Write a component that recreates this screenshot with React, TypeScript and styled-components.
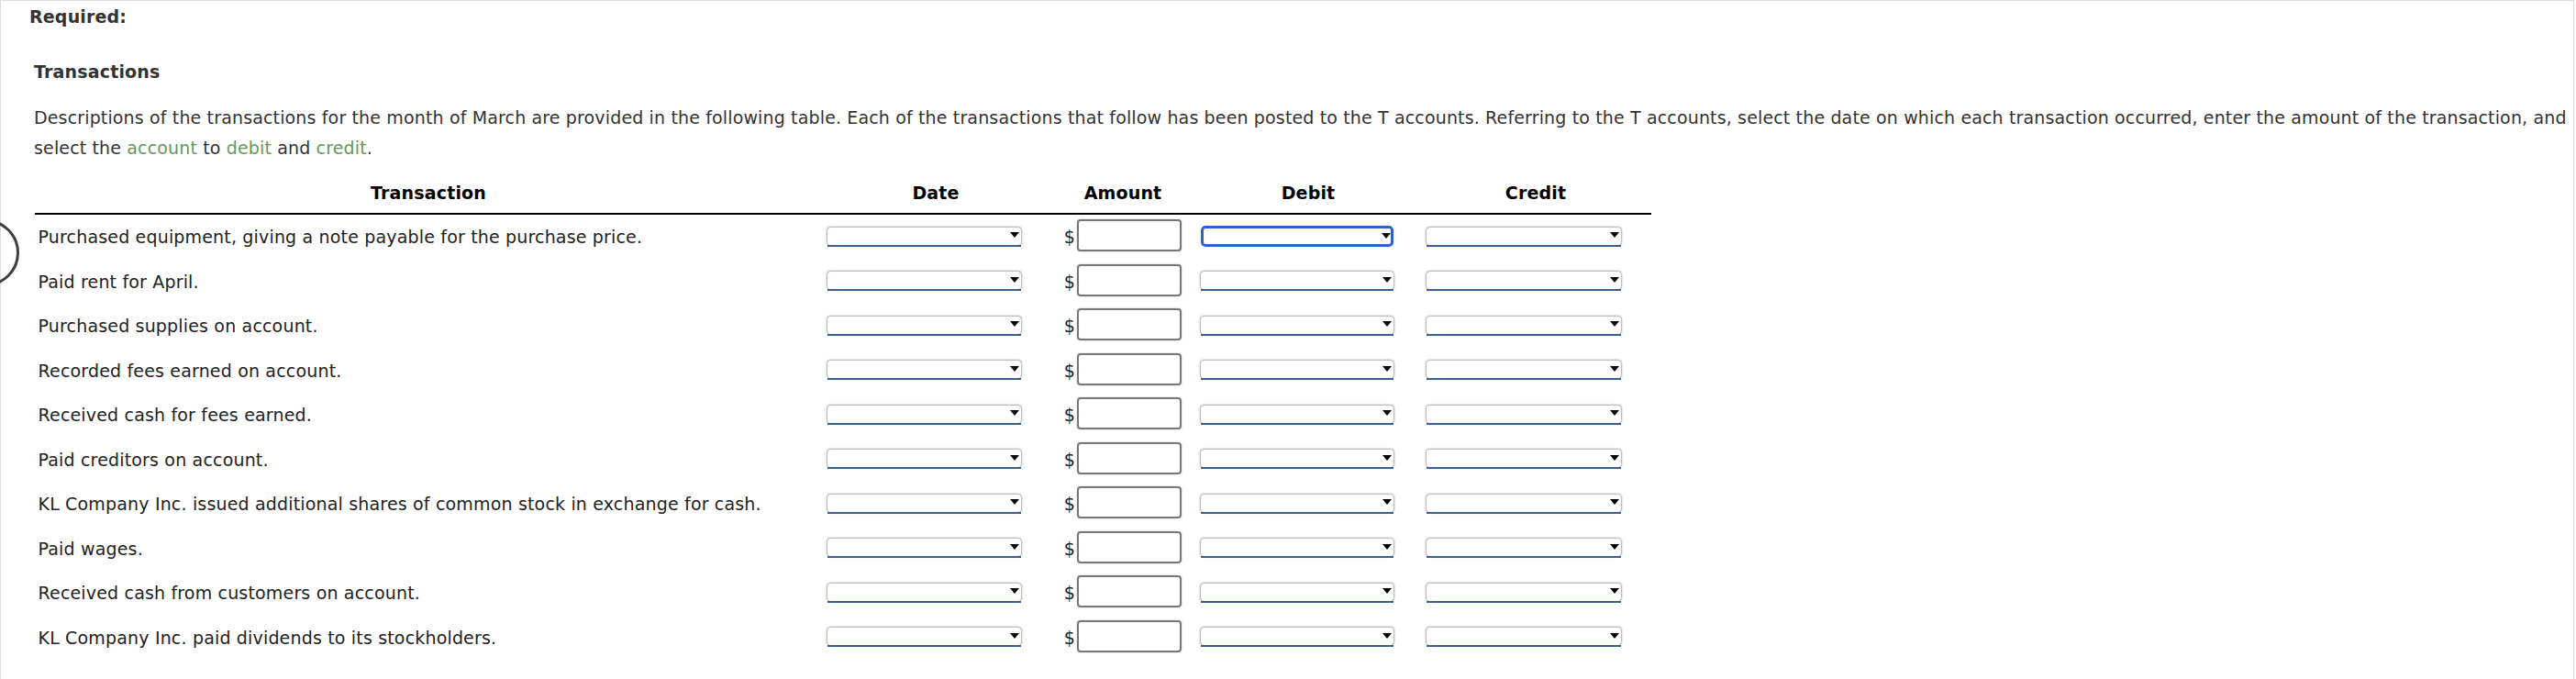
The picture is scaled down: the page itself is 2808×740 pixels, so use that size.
import React from "react";
import styled, { createGlobalStyle } from "styled-components";

const Global = createGlobalStyle`
  html, body { margin: 0; padding: 0; background: #fff; }
  body { font-family: "DejaVu Sans", Verdana, sans-serif; overflow: hidden; }
  * { box-sizing: border-box; }
`;

const Page = styled.div`
  position: relative;
  width: 2806px;
  min-height: 800px;
  border: 1px solid #dcdcdc;
  border-bottom: none;
  padding: 6.4px 0 0 31px;
  font-size: 19px;
  line-height: 22px;
  letter-spacing: 0.17px;
  color: #333;
`;

const Required = styled.div`
  font-weight: bold;
  color: #333;
`;

const Section = styled.div`
  margin-top: 38px;
  padding-left: 5px;
`;

const Heading = styled.div`
  font-weight: bold;
  color: #333;
`;

const Para = styled.p`
  margin: 22.5px 0 0;
  line-height: 33px;
  letter-spacing: 0.145px;
  white-space: nowrap;
  color: #333;
`;

const Term = styled.span`
  color: #5f9a5c;
`;

const Table = styled.div`
  margin: 21.4px 0 0 1px;
  width: 1762px;
  display: grid;
  grid-template-columns: 858px 248px 160px 244px 252px;
`;

const HeadCell = styled.div`
  font-weight: bold;
  color: #000;
  text-align: center;
  padding-bottom: 10.6px;
  border-bottom: 2px solid #000;
`;

const Row = styled.div`
  display: contents;
`;

const TextCell = styled.div`
  height: 48.5px;
  display: flex;
  align-items: center;
  padding-left: 3.5px;
  color: #222;
`;

const Cell = styled.div<{ $pad?: number; $center?: boolean }>`
  height: 48.5px;
  display: flex;
  align-items: center;
  justify-content: ${(p) => (p.$center ? "center" : "flex-start")};
  padding-left: ${(p) => p.$pad ?? 0}px;
`;

const SelectWrap = styled.div<{ $w: number }>`
  width: ${(p) => p.$w}px;
  display: flex;
  flex-direction: column;
`;

const SelectBox = styled.div<{ $focus?: boolean }>`
  height: ${(p) => (p.$focus ? 23 : 19)}px;
  margin-top: ${(p) => (p.$focus ? -1 : 0)}px;
  margin-bottom: ${(p) => (p.$focus ? -2 : 0)}px;
  background: #fff;
  border-radius: ${(p) => (p.$focus ? 5 : 4)}px;
  border: ${(p) => (p.$focus ? "3.5px solid #2c62cb" : "none")};
  box-shadow: ${(p) => (p.$focus ? "none" : "0 0 2px 0.5px rgba(0,0,0,0.35)")};
  display: flex;
  align-items: center;
  justify-content: flex-end;
  padding-right: ${(p) => (p.$focus ? 0 : 2)}px;
`;

const Arrow = styled.span`
  width: 0;
  height: 0;
  border-left: 5px solid transparent;
  border-right: 5px solid transparent;
  border-top: 6px solid #000;
  margin-top: -2px;
`;

const Underline = styled.div<{ $hide?: boolean }>`
  height: 2px;
  background: ${(p) => (p.$hide ? "transparent" : "#3d5f8c")};
`;

const Dollar = styled.span`
  color: #222;
  margin-right: 2px;
`;

const AmountInput = styled.div`
  width: 114px;
  height: 35px;
  border: 2px solid #787878;
  border-radius: 4px;
  background: #fff;
  box-shadow: 0 0 2px rgba(0, 0, 0, 0.25);
  margin-top: -3px;
`;

const Circle = styled.div`
  position: absolute;
  left: -53px;
  top: 238px;
  width: 73px;
  height: 73px;
  border: 3px solid #3f3f3f;
  border-radius: 50%;
`;

const Select: React.FC<{ w: number; focus?: boolean }> = ({ w, focus }) => (
  <SelectWrap $w={w}>
    <SelectBox $focus={focus}>
      <Arrow />
    </SelectBox>
    <Underline $hide={focus} />
  </SelectWrap>
);

const rows = [
  "Purchased equipment, giving a note payable for the purchase price.",
  "Paid rent for April.",
  "Purchased supplies on account.",
  "Recorded fees earned on account.",
  "Received cash for fees earned.",
  "Paid creditors on account.",
  "KL Company Inc. issued additional shares of common stock in exchange for cash.",
  "Paid wages.",
  "Received cash from customers on account.",
  "KL Company Inc. paid dividends to its stockholders.",
];

export default function App() {
  return (
    <>
      <Global />
      <Page>
        <Circle />
        <Required>Required:</Required>
        <Section>
          <Heading>Transactions</Heading>
          <Para>
            Descriptions of the transactions for the month of March are provided in the following table. Each of the
            transactions that follow has been posted to the T accounts. Referring to the T accounts, select the date on
            which each transaction occurred, enter the amount of the transaction, and
            <br />
            select the <Term>account</Term> to <Term>debit</Term> and <Term>credit</Term>.
          </Para>
          <Table>
            <HeadCell>Transaction</HeadCell>
            <HeadCell>Date</HeadCell>
            <HeadCell>Amount</HeadCell>
            <HeadCell>Debit</HeadCell>
            <HeadCell>Credit</HeadCell>
            {rows.map((r, i) => (
              <Row key={i}>
                <TextCell>{r}</TextCell>
                <Cell $pad={6}>
                  <Select w={211} />
                </Cell>
                <Cell $center>
                  <Dollar>$</Dollar>
                  <AmountInput />
                </Cell>
                <Cell $pad={5}>
                  <Select w={210} focus={i === 0} />
                </Cell>
                <Cell $pad={7}>
                  <Select w={212} />
                </Cell>
              </Row>
            ))}
          </Table>
        </Section>
      </Page>
    </>
  );
}
